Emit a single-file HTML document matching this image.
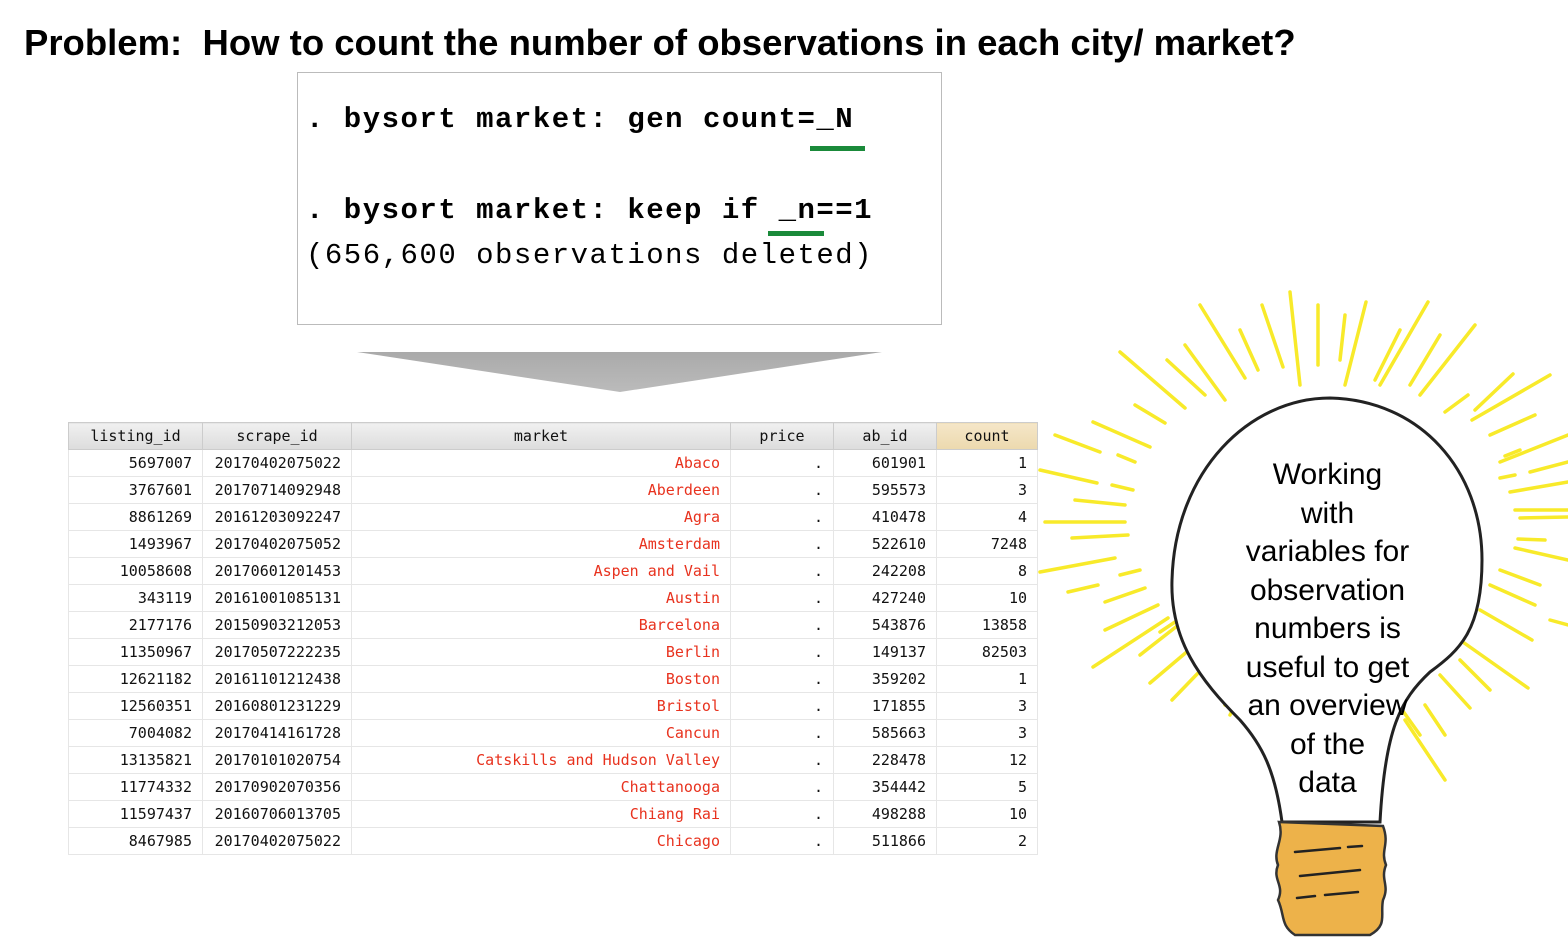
<!DOCTYPE html>
<html><head><meta charset="utf-8"><style>
body{margin:0;width:1568px;height:948px;background:#fff;position:relative;overflow:hidden;font-family:"Liberation Sans",sans-serif}
h1{position:absolute;left:24px;top:22px;margin:0;font-size:36.5px;font-weight:bold;color:#000;white-space:pre}
.code{position:absolute;left:297px;top:72px;width:645px;height:253px;border:1px solid #bbb;font-family:"Liberation Mono",monospace;font-size:29px;box-sizing:border-box}
.code div{position:absolute;left:8px;white-space:pre;letter-spacing:1.5px}
.g{position:absolute;height:5px;background:#1a8a3a}
table{position:absolute;left:68px;top:422px;border-collapse:collapse;font-family:"DejaVu Sans Mono","Liberation Mono",monospace;font-size:15px;color:#111}
td,th{height:26px;padding:0 10px;border:1px solid #e6e6e6;text-align:right}
th{font-weight:normal;text-align:center;background:linear-gradient(#f0f0f0,#dcdcdc);border-color:#ccc;height:26px}
th.c{background:linear-gradient(#f5e6c8,#ecd9ae)}
td.m{color:#e8321e}
.txt{position:absolute;left:1220px;top:456px;width:215px;text-align:center;font-size:30px;line-height:38.5px;color:#000}
</style></head><body>
<h1>Problem:  How to count the number of observations in each city/ market?</h1>
<div class="code">
<div style="top:30px;font-weight:bold">. bysort market: gen count=_N</div>
<div style="top:121px;font-weight:bold">. bysort market: keep if _n==1</div>
<div style="top:166px">(656,600 observations deleted)</div>
</div>
<div class="g" style="left:810px;top:146px;width:55px"></div>
<div class="g" style="left:768px;top:231px;width:56px"></div>
<svg style="position:absolute;left:0;top:0" width="1568" height="948">
<defs><linearGradient id="ar" x1="0" y1="0" x2="0" y2="1"><stop offset="0" stop-color="#aaa"/><stop offset="1" stop-color="#bbb"/></linearGradient></defs>
<polygon points="357,352 882,352 620,392" fill="url(#ar)"/>
<g stroke="#f8ea2a" stroke-width="3.5" stroke-linecap="round">
<line x1="1290" y1="292" x2="1300" y2="385"/><line x1="1318" y1="305" x2="1318" y2="365"/><line x1="1345" y1="315" x2="1340" y2="360"/><line x1="1366" y1="302" x2="1345" y2="385"/>
<line x1="1262" y1="305" x2="1283" y2="367"/><line x1="1200" y1="305" x2="1245" y2="378"/><line x1="1240" y1="330" x2="1258" y2="370"/><line x1="1185" y1="345" x2="1225" y2="400"/>
<line x1="1120" y1="352" x2="1185" y2="408"/><line x1="1167" y1="360" x2="1205" y2="395"/><line x1="1135" y1="405" x2="1165" y2="423"/>
<line x1="1093" y1="422" x2="1150" y2="447"/><line x1="1055" y1="435" x2="1100" y2="452"/><line x1="1118" y1="455" x2="1135" y2="462"/>
<line x1="1040" y1="470" x2="1097" y2="483"/><line x1="1112" y1="485" x2="1133" y2="490"/><line x1="1075" y1="500" x2="1125" y2="505"/>
<line x1="1045" y1="522" x2="1125" y2="522"/><line x1="1072" y1="538" x2="1128" y2="535"/><line x1="1040" y1="572" x2="1115" y2="558"/>
<line x1="1068" y1="592" x2="1098" y2="585"/><line x1="1120" y1="575" x2="1140" y2="570"/><line x1="1105" y1="602" x2="1145" y2="588"/>
<line x1="1105" y1="630" x2="1158" y2="605"/><line x1="1093" y1="667" x2="1168" y2="618"/><line x1="1160" y1="632" x2="1178" y2="620"/>
<line x1="1140" y1="655" x2="1195" y2="612"/><line x1="1150" y1="683" x2="1215" y2="628"/><line x1="1172" y1="700" x2="1230" y2="640"/>
<line x1="1230" y1="680" x2="1253" y2="640"/><line x1="1225" y1="705" x2="1240" y2="672"/><line x1="1230" y1="715" x2="1248" y2="680"/>
<line x1="1428" y1="302" x2="1380" y2="385"/><line x1="1400" y1="330" x2="1375" y2="380"/><line x1="1475" y1="325" x2="1420" y2="395"/><line x1="1440" y1="335" x2="1410" y2="385"/>
<line x1="1513" y1="374" x2="1475" y2="410"/><line x1="1468" y1="395" x2="1445" y2="412"/><line x1="1550" y1="375" x2="1472" y2="420"/>
<line x1="1535" y1="415" x2="1490" y2="435"/><line x1="1568" y1="435" x2="1500" y2="462"/><line x1="1520" y1="450" x2="1505" y2="456"/>
<line x1="1568" y1="462" x2="1530" y2="472"/><line x1="1515" y1="475" x2="1500" y2="478"/><line x1="1568" y1="482" x2="1510" y2="492"/>
<line x1="1568" y1="510" x2="1515" y2="510"/><line x1="1568" y1="517" x2="1520" y2="518"/><line x1="1545" y1="540" x2="1518" y2="539"/>
<line x1="1568" y1="560" x2="1515" y2="548"/><line x1="1540" y1="585" x2="1500" y2="570"/><line x1="1535" y1="605" x2="1490" y2="585"/>
<line x1="1532" y1="640" x2="1480" y2="610"/><line x1="1568" y1="625" x2="1550" y2="620"/><line x1="1490" y1="690" x2="1460" y2="660"/>
<line x1="1528" y1="688" x2="1460" y2="640"/><line x1="1470" y1="708" x2="1440" y2="675"/><line x1="1445" y1="735" x2="1425" y2="705"/>
<line x1="1420" y1="735" x2="1395" y2="700"/><line x1="1445" y1="780" x2="1405" y2="720"/>
</g>
<path d="M1282,822 C1275,770 1262,745 1240,720 C1200,680 1170,640 1172,580 C1175,470 1250,398 1330,398 C1420,400 1482,470 1482,560 C1482,630 1460,650 1430,672 C1400,700 1385,730 1380,822 Z" fill="#fff" stroke="#222" stroke-width="3"/>
<path d="M1279,822 L1383,826 C1390,845 1380,850 1386,865 C1380,880 1390,885 1383,900 C1380,915 1388,925 1370,935 L1295,935 C1280,925 1285,915 1278,900 C1285,885 1272,880 1278,865 C1272,850 1285,840 1279,822 Z" fill="#edb24a" stroke="#333" stroke-width="2.5"/>
<g stroke="#222" stroke-width="2.5" stroke-linecap="round"><line x1="1295" y1="852" x2="1340" y2="848"/><line x1="1348" y1="847" x2="1362" y2="846"/><line x1="1300" y1="876" x2="1360" y2="870"/><line x1="1297" y1="898" x2="1315" y2="896"/><line x1="1325" y1="895" x2="1358" y2="892"/></g>
</svg>
<div class="txt">Working<br>with<br>variables for<br>observation<br>numbers is<br>useful to get<br>an overview<br>of the<br>data</div>
<table>
<tr><th style="width:113px">listing_id</th><th style="width:128px">scrape_id</th><th style="width:358px">market</th><th style="width:82px">price</th><th style="width:82px">ab_id</th><th class="c" style="width:80px">count</th></tr>
<tr><td>5697007</td><td>20170402075022</td><td class="m">Abaco</td><td>.</td><td>601901</td><td>1</td></tr>
<tr><td>3767601</td><td>20170714092948</td><td class="m">Aberdeen</td><td>.</td><td>595573</td><td>3</td></tr>
<tr><td>8861269</td><td>20161203092247</td><td class="m">Agra</td><td>.</td><td>410478</td><td>4</td></tr>
<tr><td>1493967</td><td>20170402075052</td><td class="m">Amsterdam</td><td>.</td><td>522610</td><td>7248</td></tr>
<tr><td>10058608</td><td>20170601201453</td><td class="m">Aspen and Vail</td><td>.</td><td>242208</td><td>8</td></tr>
<tr><td>343119</td><td>20161001085131</td><td class="m">Austin</td><td>.</td><td>427240</td><td>10</td></tr>
<tr><td>2177176</td><td>20150903212053</td><td class="m">Barcelona</td><td>.</td><td>543876</td><td>13858</td></tr>
<tr><td>11350967</td><td>20170507222235</td><td class="m">Berlin</td><td>.</td><td>149137</td><td>82503</td></tr>
<tr><td>12621182</td><td>20161101212438</td><td class="m">Boston</td><td>.</td><td>359202</td><td>1</td></tr>
<tr><td>12560351</td><td>20160801231229</td><td class="m">Bristol</td><td>.</td><td>171855</td><td>3</td></tr>
<tr><td>7004082</td><td>20170414161728</td><td class="m">Cancun</td><td>.</td><td>585663</td><td>3</td></tr>
<tr><td>13135821</td><td>20170101020754</td><td class="m">Catskills and Hudson Valley</td><td>.</td><td>228478</td><td>12</td></tr>
<tr><td>11774332</td><td>20170902070356</td><td class="m">Chattanooga</td><td>.</td><td>354442</td><td>5</td></tr>
<tr><td>11597437</td><td>20160706013705</td><td class="m">Chiang Rai</td><td>.</td><td>498288</td><td>10</td></tr>
<tr><td>8467985</td><td>20170402075022</td><td class="m">Chicago</td><td>.</td><td>511866</td><td>2</td></tr>
</table>
</body></html>
